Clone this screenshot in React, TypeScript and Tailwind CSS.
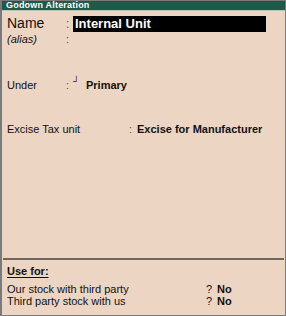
export default function App() {
  return (
    <div
      className="w-[286px] h-[316px] bg-[#ecd5c3] border border-l-2 border-[#7a7a7a] flex flex-col text-[#111]"
      style={{ fontFamily: '"Liberation Sans", Arial, sans-serif' }}
    >
      <div className="h-[10px] bg-[#1d5a47] border-b border-[#b7c8bd] px-[4px] flex items-center">
        <span className="text-[9px] leading-[9px] font-bold text-white tracking-[0.2px]">
          Godown Alteration
        </span>
      </div>

      <div className="px-[5px] pt-[4px]">
        <div className="flex items-center h-[17px]">
          <span className="w-[59px] text-[14px]">Name</span>
          <span className="w-[6px] text-[12px] text-[#555]">:</span>
          <div className="ml-[1px] w-[193px] h-[16px] bg-black flex items-center px-[2px]">
            <span className="text-[13px] font-bold text-white leading-none">
              Internal Unit
            </span>
          </div>
        </div>
        <div className="flex items-center h-[14px]">
          <span className="w-[59px] text-[11px] italic">(alias)</span>
          <span className="text-[11px] text-[#555]">:</span>
        </div>

        <div className="flex items-center h-[14px] mt-[32px]">
          <span className="w-[59px] text-[11px]">Under</span>
          <span className="w-[7px] text-[11px] text-[#555]">:</span>
          <span className="w-[13px] text-[9px] font-bold -mt-[6px]">┘</span>
          <span className="text-[11px] font-bold">Primary</span>
        </div>

        <div className="flex items-center h-[14px] mt-[30px]">
          <span className="w-[122px] text-[11px]">Excise Tax unit</span>
          <span className="w-[8px] text-[11px] text-[#555]">:</span>
          <span className="text-[11px] font-bold">Excise for Manufacturer</span>
        </div>
      </div>

      <div className="flex-1" />

      <div className="mx-[1px] h-[2px] bg-[#6e6661]" />
      <div className="px-[5px] pt-[4px] pb-[8px]">
        <div className="h-[14px] flex items-center">
          <span className="text-[11px] font-bold underline underline-offset-2">Use for:</span>
        </div>
        <div className="mt-[5px] flex items-center h-[12px]">
          <span className="w-[199px] text-[11px]">Our stock with third party</span>
          <span className="w-[11px] text-[11px]">?</span>
          <span className="text-[11px] font-bold">No</span>
        </div>
        <div className="flex items-center h-[12px]">
          <span className="w-[199px] text-[11px]">Third party stock with us</span>
          <span className="w-[11px] text-[11px]">?</span>
          <span className="text-[11px] font-bold">No</span>
        </div>
      </div>
    </div>
  );
}
